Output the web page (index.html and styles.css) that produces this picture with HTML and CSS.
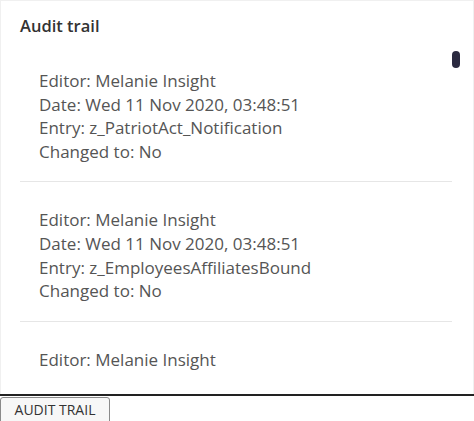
FILE: index.html
```html
<!DOCTYPE html>
<html lang="en">
<head>
<meta charset="utf-8">
<title>Audit trail</title>
<link rel="stylesheet" href="styles.css">
</head>
<body>
<section class="panel">
  <h2 class="panel-title">Audit trail</h2>
  <div class="scroll-thumb"></div>
  <div class="scroller">
    <ul class="entries">
      <li class="entry">
        <div>Editor: Melanie Insight</div>
        <div>Date: Wed 11 Nov 2020, 03:48:51</div>
        <div>Entry: z_PatriotAct_Notification</div>
        <div>Changed to: No</div>
      </li>
      <li class="entry">
        <div>Editor: Melanie Insight</div>
        <div>Date: Wed 11 Nov 2020, 03:48:51</div>
        <div>Entry: z_EmployeesAffiliatesBound</div>
        <div>Changed to: No</div>
      </li>
      <li class="entry">
        <div>Editor: Melanie Insight</div>
        <div>Date: Wed 11 Nov 2020, 03:48:51</div>
        <div>Entry: z_EmployeesAffiliatesBound</div>
        <div>Changed to: No</div>
      </li>
    </ul>
  </div>
</section>
<div class="tabs">
  <button class="tab" type="button">AUDIT TRAIL</button>
</div>
</body>
</html>
```

FILE: styles.css
```css
html, body {
  margin: 0;
  padding: 0;
  background: #ffffff;
}

body {
  font-family: "Open Sans", "Noto Sans", sans-serif;
  width: 474px;
  height: 421px;
  overflow: hidden;
}

.panel {
  position: relative;
  box-sizing: border-box;
  height: 394px;
  border: 1px solid #f0f0f0;
  border-bottom: none;
  overflow: hidden;
  background: #ffffff;
}

.panel-title {
  margin: 0;
  padding: 14px 0 0 19px;
  height: 28px;
  font-size: 16.5px;
  line-height: 22px;
  font-weight: 600;
  color: #333333;
}

.scroll-thumb {
  position: absolute;
  top: 50px;
  left: 451px;
  width: 8px;
  height: 17px;
  border-radius: 4px;
  background: #2b2a40;
}

.scroller {
  height: 328px;
  overflow: hidden;
}

.entries {
  list-style: none;
  margin: 0 21px 0 19px;
  padding: 0;
}

.entry {
  padding: 26px 0 18px 19px;
  border-bottom: 1px solid #e6e6e6;
  font-size: 17px;
  line-height: 23.6px;
  color: #555555;
}

.tabs {
  border-top: 2px solid #222222;
  height: 25px;
  overflow: hidden;
}

.tab {
  display: block;
  box-sizing: border-box;
  margin: 1px 0 0 0;
  height: 30px;
  width: 110px;
  padding: 0 0 5px 0;
  border: 1px solid #8a8a8a;
  border-radius: 3px 3px 0 0;
  background: #f7f7f7;
  font-family: "Open Sans", "Noto Sans", sans-serif;
  font-size: 14px;
  line-height: 22px;
  color: #333333;
}
```
